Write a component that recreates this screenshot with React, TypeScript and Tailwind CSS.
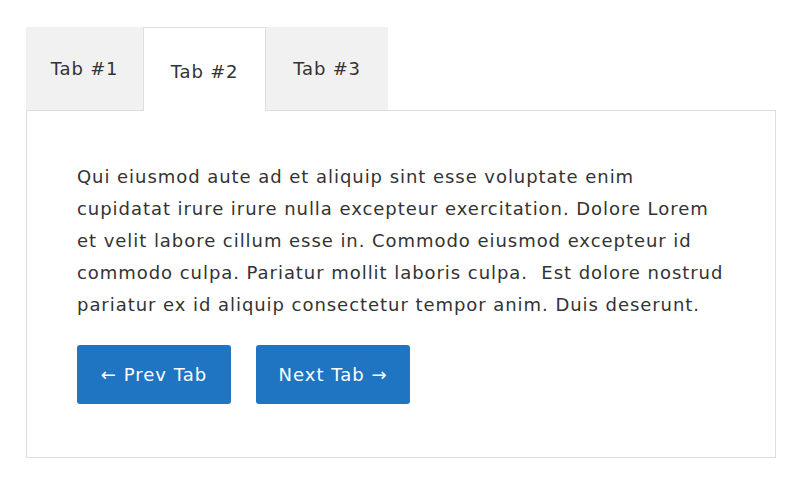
import React, { useState } from "react";

const tabs = [
  { label: "Tab #1", width: "w-[117px]" },
  { label: "Tab #2", width: "w-[123px]" },
  { label: "Tab #3", width: "w-[122px]" },
];

function App() {
  const [active, setActive] = useState(1);

  return (
    <div
      className="min-h-screen bg-white pt-[27px] px-[26px] text-[#333]"
      style={{ fontFamily: '"DejaVu Sans", "Open Sans", sans-serif' }}
    >
      <div className="w-[750px]">
        <div className="flex">
          {tabs.map((tab, i) => (
            <button
              key={tab.label}
              onClick={() => setActive(i)}
              className={`${tab.width} h-[83px] text-[18px] tracking-[0.8px] text-[#333] ${
                i === active
                  ? "bg-white border border-b-0 border-[#dedede] pt-[4px] relative z-10 -mb-px h-[84px]"
                  : "bg-[#f1f1f1]"
              }`}
            >
              {tab.label}
            </button>
          ))}
        </div>
        <div className="border border-[#dedede] p-[50px] h-[348px]">
          <p className="text-[18px] leading-[32px] tracking-[0.95px] whitespace-nowrap">
            Qui eiusmod aute ad et aliquip sint esse voluptate enim
            <br />
            cupidatat irure irure nulla excepteur exercitation. Dolore Lorem
            <br />
            et velit labore cillum esse in. Commodo eiusmod excepteur id
            <br />
            commodo culpa. Pariatur mollit laboris culpa.&nbsp; Est dolore nostrud
            <br />
            pariatur ex id aliquip consectetur tempor anim. Duis deserunt.
          </p>
          <div className="flex gap-[25px] mt-[24px]">
            <button
              onClick={() => setActive((a) => Math.max(0, a - 1))}
              className="w-[154px] h-[59px] rounded-[3px] bg-[#1f75c1] text-white text-[18px] tracking-[1px]"
            >
              ← Prev Tab
            </button>
            <button
              onClick={() => setActive((a) => Math.min(tabs.length - 1, a + 1))}
              className="w-[154px] h-[59px] rounded-[3px] bg-[#1f75c1] text-white text-[18px] tracking-[1px]"
            >
              Next Tab →
            </button>
          </div>
        </div>
      </div>
    </div>
  );
}

export default App;
